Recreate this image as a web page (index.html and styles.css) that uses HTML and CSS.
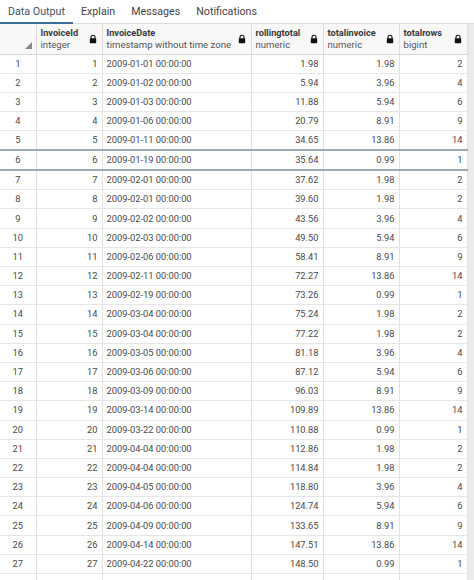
FILE: index.html
```html
<!DOCTYPE html>
<html>
<head>
<meta charset="utf-8">
<link rel="stylesheet" href="styles.css">
</head>
<body>
<div class="tabs">
  <div class="tab active">Data Output</div>
  <div class="tab">Explain</div>
  <div class="tab">Messages</div>
  <div class="tab">Notifications</div>
</div>
<div class="grid-wrap">
<table class="grid">
  <colgroup>
    <col class="c0"><col class="c1"><col class="c2"><col class="c3"><col class="c4"><col class="c5"><col class="c6">
  </colgroup>
  <thead>
    <tr>
      <th class="corner"><span class="tri"></span></th>
      <th><div class="h"><div><div class="nm">InvoiceId</div><div class="ty">integer</div></div><svg class="lock" viewBox="0 0 10 12"><path d="M2.5 5.5V3.8a2.5 2.5 0 0 1 5 0v1.7" fill="none" stroke="#111" stroke-width="1.4"/><rect x="1" y="5.2" width="8" height="6" rx="0.8" fill="#111"/></svg></div></th>
      <th><div class="h"><div><div class="nm">InvoiceDate</div><div class="ty">timestamp without time zone</div></div><svg class="lock" viewBox="0 0 10 12"><path d="M2.5 5.5V3.8a2.5 2.5 0 0 1 5 0v1.7" fill="none" stroke="#111" stroke-width="1.4"/><rect x="1" y="5.2" width="8" height="6" rx="0.8" fill="#111"/></svg></div></th>
      <th><div class="h"><div><div class="nm">rollingtotal</div><div class="ty">numeric</div></div><svg class="lock" viewBox="0 0 10 12"><path d="M2.5 5.5V3.8a2.5 2.5 0 0 1 5 0v1.7" fill="none" stroke="#111" stroke-width="1.4"/><rect x="1" y="5.2" width="8" height="6" rx="0.8" fill="#111"/></svg></div></th>
      <th><div class="h"><div><div class="nm">totalinvoice</div><div class="ty">numeric</div></div><svg class="lock" viewBox="0 0 10 12"><path d="M2.5 5.5V3.8a2.5 2.5 0 0 1 5 0v1.7" fill="none" stroke="#111" stroke-width="1.4"/><rect x="1" y="5.2" width="8" height="6" rx="0.8" fill="#111"/></svg></div></th>
      <th><div class="h"><div><div class="nm">totalrows</div><div class="ty">bigint</div></div><svg class="lock" viewBox="0 0 10 12"><path d="M2.5 5.5V3.8a2.5 2.5 0 0 1 5 0v1.7" fill="none" stroke="#111" stroke-width="1.4"/><rect x="1" y="5.2" width="8" height="6" rx="0.8" fill="#111"/></svg></div></th>
      <th class="sb"></th>
    </tr>
  </thead>
  <tbody>
    <tr><td class="idx">1</td><td class="r">1</td><td>2009-01-01 00:00:00</td><td class="r">1.98</td><td class="r">1.98</td><td class="r">2</td><td class="sb"></td></tr>
    <tr><td class="idx">2</td><td class="r">2</td><td>2009-01-02 00:00:00</td><td class="r">5.94</td><td class="r">3.96</td><td class="r">4</td><td class="sb"></td></tr>
    <tr><td class="idx">3</td><td class="r">3</td><td>2009-01-03 00:00:00</td><td class="r">11.88</td><td class="r">5.94</td><td class="r">6</td><td class="sb"></td></tr>
    <tr><td class="idx">4</td><td class="r">4</td><td>2009-01-06 00:00:00</td><td class="r">20.79</td><td class="r">8.91</td><td class="r">9</td><td class="sb"></td></tr>
    <tr class="pre"><td class="idx">5</td><td class="r">5</td><td>2009-01-11 00:00:00</td><td class="r">34.65</td><td class="r">13.86</td><td class="r">14</td><td class="sb"></td></tr>
    <tr class="sel"><td class="idx">6</td><td class="r">6</td><td>2009-01-19 00:00:00</td><td class="r">35.64</td><td class="r">0.99</td><td class="r">1</td><td class="sb"></td></tr>
    <tr><td class="idx">7</td><td class="r">7</td><td>2009-02-01 00:00:00</td><td class="r">37.62</td><td class="r">1.98</td><td class="r">2</td><td class="sb"></td></tr>
    <tr><td class="idx">8</td><td class="r">8</td><td>2009-02-01 00:00:00</td><td class="r">39.60</td><td class="r">1.98</td><td class="r">2</td><td class="sb"></td></tr>
    <tr><td class="idx">9</td><td class="r">9</td><td>2009-02-02 00:00:00</td><td class="r">43.56</td><td class="r">3.96</td><td class="r">4</td><td class="sb"></td></tr>
    <tr><td class="idx">10</td><td class="r">10</td><td>2009-02-03 00:00:00</td><td class="r">49.50</td><td class="r">5.94</td><td class="r">6</td><td class="sb"></td></tr>
    <tr><td class="idx">11</td><td class="r">11</td><td>2009-02-06 00:00:00</td><td class="r">58.41</td><td class="r">8.91</td><td class="r">9</td><td class="sb"></td></tr>
    <tr><td class="idx">12</td><td class="r">12</td><td>2009-02-11 00:00:00</td><td class="r">72.27</td><td class="r">13.86</td><td class="r">14</td><td class="sb"></td></tr>
    <tr><td class="idx">13</td><td class="r">13</td><td>2009-02-19 00:00:00</td><td class="r">73.26</td><td class="r">0.99</td><td class="r">1</td><td class="sb"></td></tr>
    <tr><td class="idx">14</td><td class="r">14</td><td>2009-03-04 00:00:00</td><td class="r">75.24</td><td class="r">1.98</td><td class="r">2</td><td class="sb"></td></tr>
    <tr><td class="idx">15</td><td class="r">15</td><td>2009-03-04 00:00:00</td><td class="r">77.22</td><td class="r">1.98</td><td class="r">2</td><td class="sb"></td></tr>
    <tr><td class="idx">16</td><td class="r">16</td><td>2009-03-05 00:00:00</td><td class="r">81.18</td><td class="r">3.96</td><td class="r">4</td><td class="sb"></td></tr>
    <tr><td class="idx">17</td><td class="r">17</td><td>2009-03-06 00:00:00</td><td class="r">87.12</td><td class="r">5.94</td><td class="r">6</td><td class="sb"></td></tr>
    <tr><td class="idx">18</td><td class="r">18</td><td>2009-03-09 00:00:00</td><td class="r">96.03</td><td class="r">8.91</td><td class="r">9</td><td class="sb"></td></tr>
    <tr><td class="idx">19</td><td class="r">19</td><td>2009-03-14 00:00:00</td><td class="r">109.89</td><td class="r">13.86</td><td class="r">14</td><td class="sb"></td></tr>
    <tr><td class="idx">20</td><td class="r">20</td><td>2009-03-22 00:00:00</td><td class="r">110.88</td><td class="r">0.99</td><td class="r">1</td><td class="sb"></td></tr>
    <tr><td class="idx">21</td><td class="r">21</td><td>2009-04-04 00:00:00</td><td class="r">112.86</td><td class="r">1.98</td><td class="r">2</td><td class="sb"></td></tr>
    <tr><td class="idx">22</td><td class="r">22</td><td>2009-04-04 00:00:00</td><td class="r">114.84</td><td class="r">1.98</td><td class="r">2</td><td class="sb"></td></tr>
    <tr><td class="idx">23</td><td class="r">23</td><td>2009-04-05 00:00:00</td><td class="r">118.80</td><td class="r">3.96</td><td class="r">4</td><td class="sb"></td></tr>
    <tr><td class="idx">24</td><td class="r">24</td><td>2009-04-06 00:00:00</td><td class="r">124.74</td><td class="r">5.94</td><td class="r">6</td><td class="sb"></td></tr>
    <tr><td class="idx">25</td><td class="r">25</td><td>2009-04-09 00:00:00</td><td class="r">133.65</td><td class="r">8.91</td><td class="r">9</td><td class="sb"></td></tr>
    <tr><td class="idx">26</td><td class="r">26</td><td>2009-04-14 00:00:00</td><td class="r">147.51</td><td class="r">13.86</td><td class="r">14</td><td class="sb"></td></tr>
    <tr><td class="idx">27</td><td class="r">27</td><td>2009-04-22 00:00:00</td><td class="r">148.50</td><td class="r">0.99</td><td class="r">1</td><td class="sb"></td></tr>
    <tr class="last"><td class="idx"></td><td></td><td></td><td></td><td></td><td></td><td class="sb"></td></tr>
  </tbody>
</table>
</div>
</body>
</html>
```
FILE: styles.css
```css
html, body {
  margin: 0;
  padding: 0;
  background: #ffffff;
  font-family: Roboto, "Liberation Sans", sans-serif;
  color: #333;
  overflow: hidden;
}
.tabs {
  display: flex;
  height: 24px;
  border-bottom: 1px solid #dcdcdc;
  box-sizing: border-box;
}
.tab {
  font-size: 10.7px;
  color: #444;
  padding: 4px 8px 0 8px;
  line-height: 16px;
  box-sizing: border-box;
}
.tab.active {
  color: #3c5266;
  border-bottom: 2px solid #3a6d99;
  margin-bottom: -1px;
}
.grid-wrap {
  width: 474px;
}
.grid {
  border-collapse: collapse;
  table-layout: fixed;
  width: 474px;
}
.c0 { width: 36px; }
.c1 { width: 66px; }
.c2 { width: 149px; }
.c3 { width: 72px; }
.c4 { width: 76px; }
.c5 { width: 68px; }
.c6 { width: 7px; }
th {
  height: 30px;
  padding: 0 5px 0 4px;
  text-align: left;
  vertical-align: middle;
  background: #f8f8f8;
  border-right: 1px solid #dddddd;
  border-bottom: 1px solid #d6d6d6;
  font-weight: normal;
  box-sizing: border-box;
  white-space: nowrap;
}
th.corner {
  position: relative;
}
.tri {
  position: absolute;
  right: 4px;
  bottom: 5px;
  width: 0;
  height: 0;
  border-left: 7px solid transparent;
  border-bottom: 7px solid #888;
}
.h {
  display: flex;
  align-items: center;
  justify-content: space-between;
}
.nm {
  font-size: 9.2px;
  font-weight: bold;
  color: #3a3a3a;
  line-height: 12px;
}
.ty {
  font-size: 9.6px;
  color: #555;
  line-height: 12px;
}
.lock {
  width: 8px;
  height: 10px;
  flex: none;
}
td {
  height: 19.2px;
  padding: 0 4px;
  font-size: 9.3px;
  color: #4a4a4a;
  border-right: 1px solid #e2e2e2;
  border-bottom: 1px solid #e6e6e6;
  white-space: nowrap;
  overflow: hidden;
  box-sizing: border-box;
  line-height: 18px;
}
td.r { text-align: right; }
td.idx { text-align: center; }
.sb {
  background: #ebebeb;
  border-right: none;
  border-bottom: none;
  padding: 0;
}
tr.sel td, tr.pre td {
  border-bottom: 2px solid #9aabbf;
}
tr.sel td.sb, tr.pre td.sb {
  border-bottom: none;
}
tr.last td {
  border-bottom: none;
}
```
